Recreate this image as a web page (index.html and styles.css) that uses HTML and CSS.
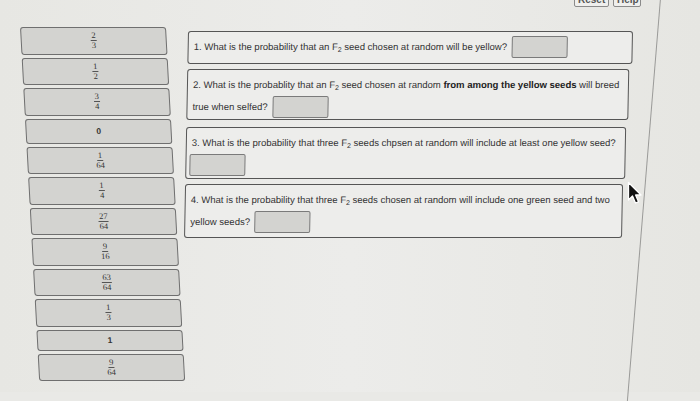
FILE: index.html
```html
<!DOCTYPE html>
<html>
<head>
<meta charset="utf-8">
<link rel="stylesheet" href="styles.css">
</head>
<body>
<div class="page">
  <div class="toolbar">
    <button class="tbtn">Reset</button>
    <button class="tbtn">Help</button>
  </div>
  <div class="main">
    <div class="tiles">
      <div class="tile"><span class="frac"><span class="num">2</span><span class="den">3</span></span></div>
      <div class="tile"><span class="frac"><span class="num">1</span><span class="den">2</span></span></div>
      <div class="tile"><span class="frac"><span class="num">3</span><span class="den">4</span></span></div>
      <div class="tile short"><span class="whole">0</span></div>
      <div class="tile"><span class="frac"><span class="num">1</span><span class="den">64</span></span></div>
      <div class="tile"><span class="frac"><span class="num">1</span><span class="den">4</span></span></div>
      <div class="tile"><span class="frac"><span class="num">27</span><span class="den">64</span></span></div>
      <div class="tile"><span class="frac"><span class="num">9</span><span class="den">16</span></span></div>
      <div class="tile"><span class="frac"><span class="num">63</span><span class="den">64</span></span></div>
      <div class="tile"><span class="frac"><span class="num">1</span><span class="den">3</span></span></div>
      <div class="tile shorter"><span class="whole">1</span></div>
      <div class="tile"><span class="frac"><span class="num">9</span><span class="den">64</span></span></div>
    </div>
    <div class="questions">
      <div class="q q1">1. What is the probability that an F<sub>2</sub> seed chosen at random will be yellow? <span class="drop"></span></div>
      <div class="q q2">2. What is the probablity that an F<sub>2</sub> seed chosen at random <b>from among the yellow seeds</b> will breed true when selfed? <span class="drop"></span></div>
      <div class="q q3">3. What is the probability that three F<sub>2</sub> seeds chpsen at random will include at least one yellow seed? <span class="drop"></span></div>
      <div class="q q4">4. What is the probability that three F<sub>2</sub> seeds chosen at random will include one green seed and two yellow seeds? <span class="drop"></span></div>
    </div>
  </div>
  <div class="edge"></div>
  <svg class="cursor" width="16" height="24" viewBox="0 0 16 24">
    <path d="M1.5 1.5 L1.5 19 L5.5 15 L8.5 22 L11.5 20.8 L8.6 14 L14 14 Z" fill="#111" stroke="#fff" stroke-width="1.3" stroke-linejoin="round"/>
  </svg>
</div>
</body>
</html>
```
FILE: styles.css
```css
* { box-sizing: border-box; }
html, body {
  margin: 0;
  padding: 0;
  width: 700px;
  height: 401px;
  overflow: hidden;
}
body {
  background: #e9e9e6;
  font-family: "Liberation Sans", Arial, sans-serif;
  color: #333;
}
.page {
  position: relative;
  width: 700px;
  height: 401px;
  background: linear-gradient(90deg, #e7e7e3 0%, #ececea 50%, #e6e6e2 100%);
}
.toolbar {
  display: flex;
  justify-content: flex-end;
  gap: 4px;
  height: 36px;
  padding-right: 59px;
  margin-top: -9px;
}
.tbtn {
  height: 16px;
  padding: 0 3px;
  font: bold 10px "Liberation Sans", Arial, sans-serif;
  color: #555;
  background: #efefed;
  border: 1px solid #8a8a8a;
  border-radius: 2px;
}
.tbtn:first-child { width: 35px; }
.tbtn:last-child { width: 28px; }
.main {
  display: flex;
  gap: 22px;
  padding-left: 20px;
}
.tiles {
  display: flex;
  flex-direction: column;
  gap: 3px;
  width: 146px;
  transform: skewX(3.1deg);
  transform-origin: top left;
}
.tile {
  height: 27.5px;
  background: #d3d3d0;
  border: 1.5px solid #6f6f6f;
  border-radius: 3px;
  display: flex;
  align-items: center;
  justify-content: center;
  font-family: "Liberation Serif", "Times New Roman", serif;
  color: #333;
}
.tile.short { height: 25px; }
.tile.shorter { height: 21px; }
.frac {
  display: inline-flex;
  flex-direction: column;
  align-items: center;
  font-size: 8.5px;
  line-height: 9px;
}
.num {
  border-bottom: 1px solid #555;
  padding: 0 1px;
}
.den { padding: 0 1px; }
.whole {
  font-family: "Liberation Sans", Arial, sans-serif;
  font-weight: bold;
  font-size: 8.5px;
}
.questions {
  display: flex;
  flex-direction: column;
  gap: 5px;
  width: 445px;
  margin-top: 4px;
  transform: skewX(-1.1deg);
  transform-origin: top left;
}
.q {
  border: 1.5px solid #555;
  border-radius: 3px;
  padding: 4px 2px 4px 5px;
  font-size: 9.5px;
  line-height: 22px;
  background: #ededeb;
}
.q1 { height: 33px; }
.q2 { height: 51px; width: 442px; }
.q3 { height: 52px; width: 440px; margin-top: 2px; }
.q4 { height: 54px; width: 438px; }
.q sub {
  font-size: 7px;
  vertical-align: baseline;
  position: relative;
  top: 2px;
  line-height: 1;
}
.q b { color: #222; }
.drop {
  display: inline-block;
  width: 56px;
  height: 22px;
  vertical-align: middle;
  background: #d3d3d0;
  border: 1.5px solid #7a7a7a;
  border-radius: 2px;
  margin-left: 2px;
}
.q3 .drop { display: block; margin: 0 0 0 -2px; }
.edge {
  position: absolute;
  left: 661px;
  top: -5px;
  width: 1px;
  height: 420px;
  background: #9a9a98;
  transform: rotate(4.7deg);
  transform-origin: top left;
}
.cursor {
  position: absolute;
  left: 627px;
  top: 190px;
}
```
